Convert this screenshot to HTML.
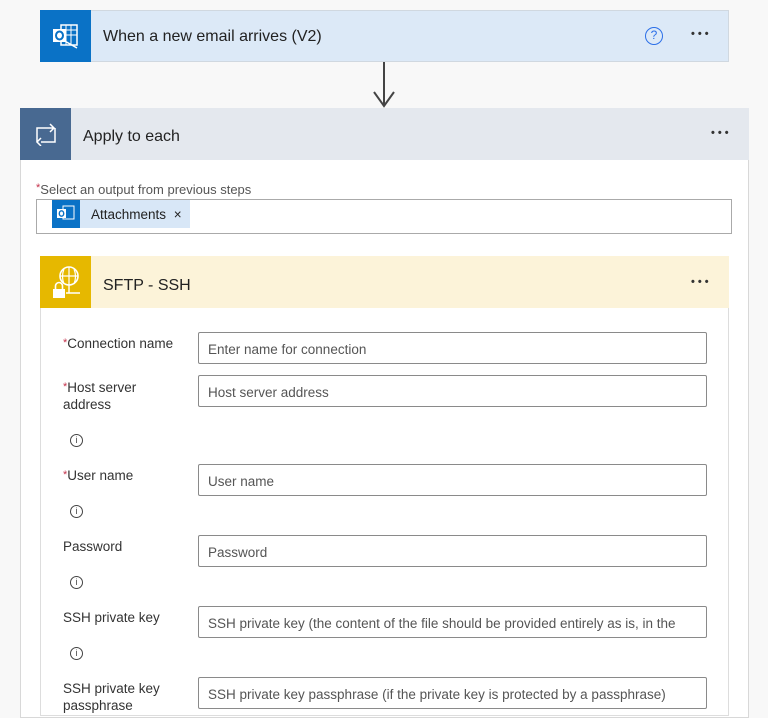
<!DOCTYPE html>
<html><head><style>
*{box-sizing:border-box;margin:0;padding:0}
body{width:768px;height:707px;overflow:hidden;background:#f8f8f8;font-family:"Liberation Sans",sans-serif;position:relative;color:#333}
.a{position:absolute}
.dots{position:absolute;font-size:11px;letter-spacing:3px;color:#333;font-weight:bold}
.lbl{position:absolute;left:63px;font-size:13.5px;color:#333;line-height:17px}
.req{color:#c4314b;font-size:11px;vertical-align:top}
.inp{position:absolute;left:198px;width:509px;height:32px;border:1px solid #8a8a8a;border-radius:2px;background:#fff;font-size:13.5px;color:#555;padding:9px 9px 0;white-space:nowrap;overflow:hidden}
.info{position:absolute;left:70px;width:13px;height:13px;border:1px solid #444;border-radius:50%;font-size:9px;text-align:center;line-height:11px;color:#444}
</style></head><body>
<!-- top card -->
<div class="a" style="left:40px;top:10px;width:689px;height:52px;background:#dce9f7;border:1px solid #d0d8e0"></div>
<div class="a" style="left:40px;top:10px;width:51px;height:52px;background:#0a72c6"></div>
<svg class="a" style="left:50px;top:20px" width="32" height="32" viewBox="0 0 32 32"><rect x="11" y="5" width="16" height="20" fill="none" stroke="#fff" stroke-width="1.5"/><path d="M11 10h16M11 15h16M16 5v20M21 5v20" stroke="#fff" stroke-width="1"/><rect x="3" y="9" width="13" height="13" fill="#fff"/><ellipse cx="9.5" cy="15.5" rx="3.5" ry="4" fill="none" stroke="#0a72c6" stroke-width="2"/><path d="M13 20l14 8" stroke="#fff" stroke-width="1.5"/></svg>
<div class="a" style="left:103px;top:28px;font-size:16px;color:#222">When a new email arrives (V2)</div>
<div class="a" style="left:645px;top:27px;width:18px;height:18px;border:1.5px solid #2b6fe8;border-radius:50%;color:#2b6fe8;font-size:12px;text-align:center;line-height:15px">?</div>
<div class="dots" style="left:691px;top:28px">•••</div>
<!-- arrow -->
<div class="a" style="left:383px;top:62px;width:2px;height:44px;background:#444"></div>
<svg class="a" style="left:372px;top:90px" width="24" height="18"><path d="M2 2l10 14 10-14" fill="none" stroke="#444" stroke-width="2"/></svg>
<!-- apply card -->
<div class="a" style="left:20px;top:108px;width:729px;height:610px;background:#fff;border:1px solid #d8d8d8"></div>
<div class="a" style="left:20px;top:108px;width:729px;height:52px;background:#e4e8ee"></div>
<div class="a" style="left:20px;top:108px;width:51px;height:52px;background:#486991"></div>
<svg class="a" style="left:32px;top:122px" width="28" height="24"><path d="M5 20V6h17M18 2l4 4-4 4M23 6v14H9M9 16l-4 4 4 4" fill="none" stroke="#fff" stroke-width="1.5"/></svg>
<div class="a" style="left:83px;top:128px;font-size:16px;color:#222">Apply to each</div>
<div class="dots" style="left:711px;top:127px">•••</div>
<div class="a" style="left:36px;top:182px;font-size:13px;color:#555"><span class="req">*</span>Select an output from previous steps</div>
<div class="a" style="left:36px;top:199px;width:696px;height:35px;border:1px solid #aaa;background:#fff"></div>
<div class="a" style="left:52px;top:200px;width:138px;height:28px;background:#d8e7f7"></div>
<div class="a" style="left:52px;top:200px;width:28px;height:28px;background:#0a72c6"></div>
<svg class="a" style="left:55px;top:204px" width="22" height="20"><rect x="8" y="2" width="11" height="13" fill="none" stroke="#fff"/><rect x="2" y="5" width="9" height="9" fill="#fff"/><ellipse cx="6.5" cy="9.5" rx="2.2" ry="2.7" fill="none" stroke="#0a72c6" stroke-width="1.4"/></svg>
<div class="a" style="left:91px;top:207px;font-size:13.5px;color:#222">Attachments <span style="margin-left:4px">×</span></div>
<!-- sftp card -->
<div class="a" style="left:40px;top:256px;width:689px;height:460px;background:#fff;border:1px solid #ddd"></div>
<div class="a" style="left:40px;top:256px;width:689px;height:52px;background:#fcf3d9"></div>
<div class="a" style="left:40px;top:256px;width:51px;height:52px;background:#e6b800"></div>
<svg class="a" style="left:50px;top:264px" width="34" height="38"><circle cx="19" cy="12" r="9" fill="none" stroke="#fff" stroke-width="1.6"/><path d="M10 12h18M19 3v18M14 5c-2 5-2 10 0 15M24 5c2 5 2 10 0 15" fill="none" stroke="#fff" stroke-width="1.2"/><rect x="3" y="25" width="12" height="9" fill="#fff"/><path d="M5.5 25v-3a3.5 3.5 0 0 1 7 0v3" fill="none" stroke="#fff" stroke-width="1.6"/><path d="M19 21v8M16 29h14" fill="none" stroke="#fff" stroke-width="1.4"/></svg>
<div class="a" style="left:103px;top:277px;font-size:16px;color:#222">SFTP - SSH</div>
<div class="dots" style="left:691px;top:276px">•••</div>

<div class="lbl" style="top:335px"><span class="req">*</span>Connection name</div>
<div class="inp" style="top:332px">Enter name for connection</div>
<div class="lbl" style="top:379px"><span class="req">*</span>Host server<br>address</div>
<div class="inp" style="top:375px">Host server address</div>
<div class="info" style="top:434px">i</div>
<div class="lbl" style="top:467px"><span class="req">*</span>User name</div>
<div class="inp" style="top:464px">User name</div>
<div class="info" style="top:505px">i</div>
<div class="lbl" style="top:538px">Password</div>
<div class="inp" style="top:535px">Password</div>
<div class="info" style="top:576px">i</div>
<div class="lbl" style="top:609px">SSH private key</div>
<div class="inp" style="top:606px">SSH private key (the content of the file should be provided entirely as is, in the</div>
<div class="info" style="top:647px">i</div>
<div class="lbl" style="top:680px">SSH private key<br>passphrase</div>
<div class="inp" style="top:677px">SSH private key passphrase (if the private key is protected by a passphrase)</div>
</body></html>
